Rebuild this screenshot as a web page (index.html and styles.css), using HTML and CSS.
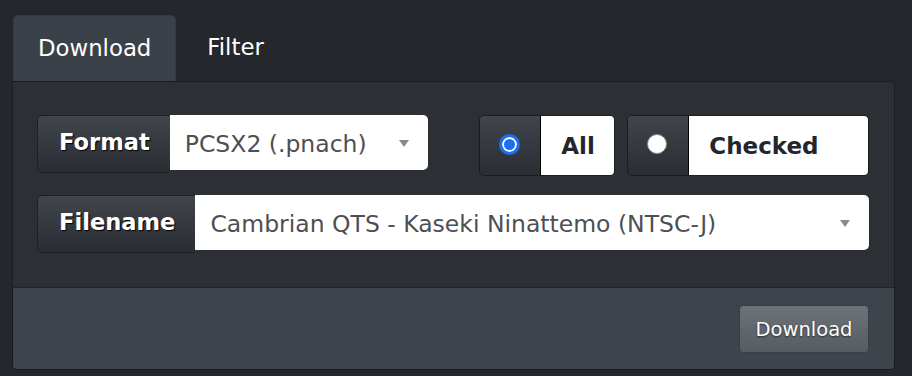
FILE: index.html
```html
<!DOCTYPE html>
<html lang="en">
<head>
  <meta charset="UTF-8">
  <meta name="viewport" content="width=device-width, initial-scale=1.0">
  <title>Cheat Download</title>
  <link rel="stylesheet" href="styles.css">
</head>
<body>
  <!-- Tabs -->
  <div class="tabs">
    <div class="tab active">Download</div>
    <div class="tab">Filter</div>
  </div>

  <!-- Download Panel -->
  <div class="panel">
    <div class="panel-body">
      <div class="row">
        <div class="field">
          <span class="field-label">Format</span>
          <div class="select format-select">
            <span>PCSX2 (.pnach)</span>
            <span class="caret"></span>
          </div>
        </div>

        <div class="radio-group first">
          <span class="radio-cell"><span class="radio checked"></span></span>
          <span class="radio-text all">All</span>
        </div>
        <div class="radio-group">
          <span class="radio-cell"><span class="radio"></span></span>
          <span class="radio-text checked-text">Checked</span>
        </div>
      </div>

      <div class="row">
        <div class="field wide">
          <span class="field-label">Filename</span>
          <div class="select grow">
            <span>Cambrian QTS - Kaseki Ninattemo (NTSC-J)</span>
            <span class="caret"></span>
          </div>
        </div>
      </div>
    </div>

    <div class="panel-footer">
      <button class="download-btn">Download</button>
    </div>
  </div>
</body>
</html>
```

FILE: styles.css
```css
/* General Styling */
body {
  font-family: "DejaVu Sans", Verdana, sans-serif;
  margin: 0;
  padding: 15px 17px 0 12px;
  background-color: #24272b;
  color: #fff;
}

/* Tabs */
.tabs {
  display: flex;
  padding-left: 1px;
}

.tab {
  height: 66px;
  line-height: 64px;
  padding: 0 24px;
  margin-right: 7px;
  font-size: 22.8px;
  color: #fff;
  border-radius: 5px 5px 0 0;
  box-sizing: border-box;
}

.tab.active {
  background: #3b4148;
  border: 1px solid #33383e;
  border-bottom: none;
}

/* Panel */
.panel {
  background: #2c3035;
  border: 1px solid #1b1d21;
  border-radius: 0 5px 5px 5px;
  overflow: hidden;
}

.panel-body {
  padding: 33px 25px 34px 24px;
  display: flex;
  flex-direction: column;
  gap: 19px;
}

.row {
  display: flex;
  align-items: flex-start;
}

.field {
  display: flex;
  align-items: flex-start;
}

.field.wide {
  flex-grow: 1;
}

.field-label {
  height: 58px;
  line-height: 52px;
  padding: 0 20px 0 21px;
  font-weight: bold;
  font-size: 22.6px;
  color: #fff;
  text-shadow: 1px 1px 1px #000;
  background: linear-gradient(#41454c, #2a2d32);
  border: 1px solid #1e2024;
  border-right: none;
  border-radius: 5px 0 0 5px;
  box-sizing: border-box;
}

.select {
  height: 55px;
  display: flex;
  align-items: center;
  justify-content: space-between;
  padding: 2px 19px 0 15px;
  background: #fff;
  color: #4d4f53;
  font-size: 23.5px;
  border-radius: 0 5px 5px 0;
  box-sizing: border-box;
}

.format-select {
  width: 258px;
}

.select.grow {
  flex-grow: 1;
}

.caret {
  width: 0;
  height: 0;
  border-left: 5px solid transparent;
  border-right: 5px solid transparent;
  border-top: 7px solid #8a8a8a;
}

/* Radio groups */
.radio-group {
  display: flex;
  height: 61px;
  border: 1px solid #1b1d21;
  border-radius: 5px;
  overflow: hidden;
  box-sizing: border-box;
  margin-left: 12px;
}

.radio-group.first {
  margin-left: 51px;
}

.radio-cell {
  width: 61px;
  display: flex;
  align-items: center;
  justify-content: center;
  background: linear-gradient(#41454c, #2a2d32);
  border-right: 1px solid #000;
}

.radio {
  width: 20px;
  height: 20px;
  border-radius: 50%;
  background: #fff;
  border: 1px solid #8d8d8d;
  box-sizing: border-box;
  margin-top: -3px;
  margin-left: -2px;
}

.radio.checked {
  width: 21px;
  height: 21px;
  background: #1a6ff2;
  border: 3px solid #1a6ff2;
  box-shadow: inset 0 0 0 2px #fff;
}

.radio-text {
  background: #fff;
  color: #23262b;
  font-weight: bold;
  font-size: 23px;
  line-height: 60px;
  padding-left: 20px;
}

.radio-text.all {
  width: 73px;
  box-sizing: border-box;
}

.radio-text.checked-text {
  width: 180px;
  box-sizing: border-box;
}

/* Footer */
.panel-footer {
  background: #3d444c;
  border-top: 1px solid #202327;
  padding: 17px 25px 16px;
  display: flex;
  justify-content: flex-end;
}

.download-btn {
  width: 130px;
  height: 48px;
  font-family: "DejaVu Sans", Verdana, sans-serif;
  font-size: 19.5px;
  color: #fff;
  text-shadow: 0 1px 2px rgba(0, 0, 0, 0.6);
  background: linear-gradient(#6e737a, #575c63);
  border: 1px solid #3a3f45;
  border-radius: 4px;
  cursor: pointer;
}
```
